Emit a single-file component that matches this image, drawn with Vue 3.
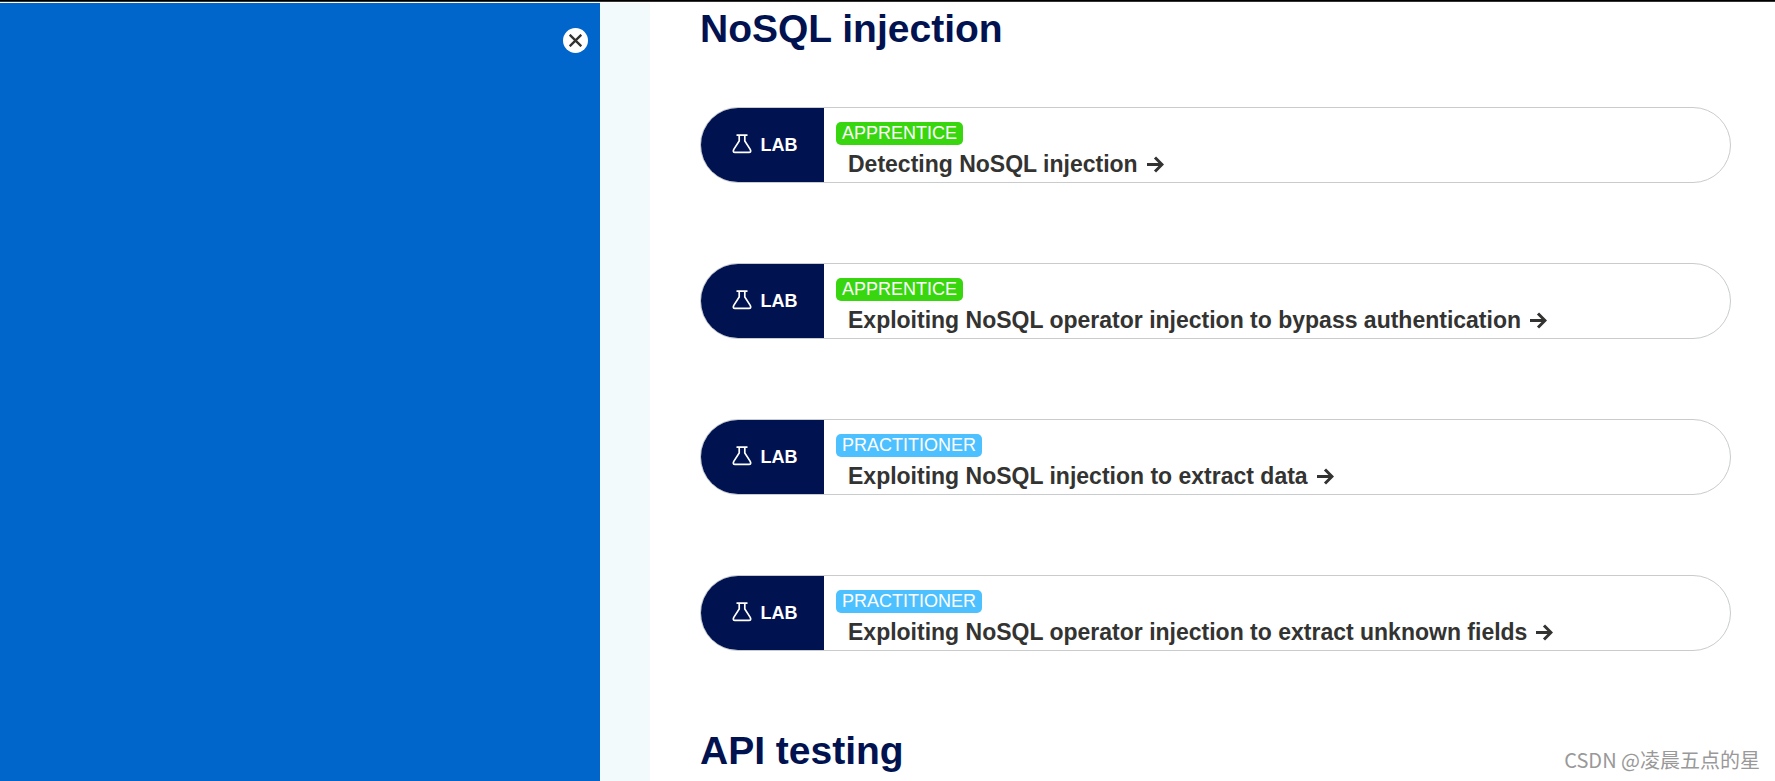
<script setup>
const labs = [
  { level: 'APPRENTICE', title: 'Detecting NoSQL injection' },
  { level: 'APPRENTICE', title: 'Exploiting NoSQL operator injection to bypass authentication' },
  { level: 'PRACTITIONER', title: 'Exploiting NoSQL injection to extract data' },
  { level: 'PRACTITIONER', title: 'Exploiting NoSQL operator injection to extract unknown fields' },
]
</script>

<template>
  <div class="page">
    <div class="topbar"></div>
    <div class="layout">
      <aside class="sidebar">
        <button class="close" type="button" aria-label="Close menu">
          <svg width="13" height="13" viewBox="0 0 13 13" aria-hidden="true">
            <path d="M.7 .7L12.3 12.3M12.3 .7L.7 12.3" fill="none" stroke="#333332" stroke-width="2.3" />
          </svg>
        </button>
      </aside>
      <main class="content">
        <h2>NoSQL injection</h2>
        <ul class="labs">
          <li v-for="lab in labs" :key="lab.title" class="lab">
            <div class="tag">
              <svg width="20" height="22" viewBox="0 0 20 22" aria-hidden="true">
                <path d="M4.5 1.2H15.5M7.2 1.2V7L1.8 15.4Q.4 18.3 3 18.3H17Q19.6 18.3 18.2 15.4L12.8 7V1.2" fill="none" stroke="#fff" stroke-width="1.7" />
              </svg>
              <span>LAB</span>
            </div>
            <div class="info">
              <span class="level" :class="lab.level.toLowerCase()">{{ lab.level }}</span>
              <a href="#" class="title">
                {{ lab.title }}
                <svg width="17" height="17" viewBox="0 0 17 17" aria-hidden="true">
                  <path d="M0 8.5H15M8 1.5L15 8.5L8 15.5" fill="none" stroke="#333332" stroke-width="3" />
                </svg>
              </a>
            </div>
          </li>
        </ul>
        <h2>API testing</h2>
      </main>
    </div>
    <div class="watermark">CSDN @凌晨五点的星</div>
  </div>
</template>

<style>
body {
  margin: 0;
  background: #fff;
}
</style>

<style scoped>
.page {
  position: relative;
  display: flex;
  flex-direction: column;
  height: 100vh;
  overflow: hidden;
  font-family: "Liberation Sans", Arial, sans-serif;
  color: #333332;
}
.topbar {
  flex: none;
  height: 1px;
  background: #000;
  border-bottom: 1px solid #333;
  margin-bottom: 1px;
}
.layout {
  display: flex;
  flex: 1;
  min-height: 0;
}
.sidebar {
  display: flex;
  justify-content: flex-end;
  align-items: flex-start;
  flex: none;
  width: 600px;
  padding: 25px 12px;
  box-sizing: border-box;
  background: #0066cc;
}
.close {
  display: flex;
  align-items: center;
  justify-content: center;
  width: 25px;
  height: 25px;
  padding: 0;
  border: 0;
  border-radius: 50%;
  background: #fff;
  cursor: pointer;
}
.content {
  flex: 1;
  padding: 2px 44px 0 50px;
  border-left: 50px solid #f2fafc;
}
h2 {
  margin: 0;
  font-size: 39px;
  line-height: 48px;
  color: #00124f;
}
.labs {
  display: flex;
  flex-direction: column;
  gap: 80px;
  margin: 54px 0 76px;
  padding: 0;
  list-style: none;
}
.lab {
  display: flex;
  height: 74px;
  border: 1px solid #c8cccc;
  border-radius: 38px;
  overflow: hidden;
}
.tag {
  display: flex;
  align-items: center;
  justify-content: center;
  flex: none;
  gap: 9px;
  width: 123px;
  padding-left: 4px;
  box-sizing: border-box;
  background: #00124f;
  color: #fff;
  font-size: 18px;
  font-weight: 700;
}
.info {
  display: flex;
  flex-direction: column;
  align-items: flex-start;
  padding: 14px 12px 0;
}
.level {
  padding: 0 6px;
  border-radius: 5px;
  color: #fff;
  font-size: 18px;
  line-height: 23px;
}
.apprentice {
  background: #38d60e;
}
.practitioner {
  background: #4dc0ff;
}
.title {
  display: flex;
  align-items: center;
  gap: 9px;
  padding: 6px 0 0 12px;
  color: #333332;
  font-size: 23px;
  font-weight: 700;
  line-height: 26px;
  text-decoration: none;
  white-space: nowrap;
}
.watermark {
  position: absolute;
  right: 15px;
  bottom: 8px;
  color: #999;
  font-family: "Noto Sans CJK SC", sans-serif;
  font-size: 20px;
  line-height: 26px;
}
</style>
